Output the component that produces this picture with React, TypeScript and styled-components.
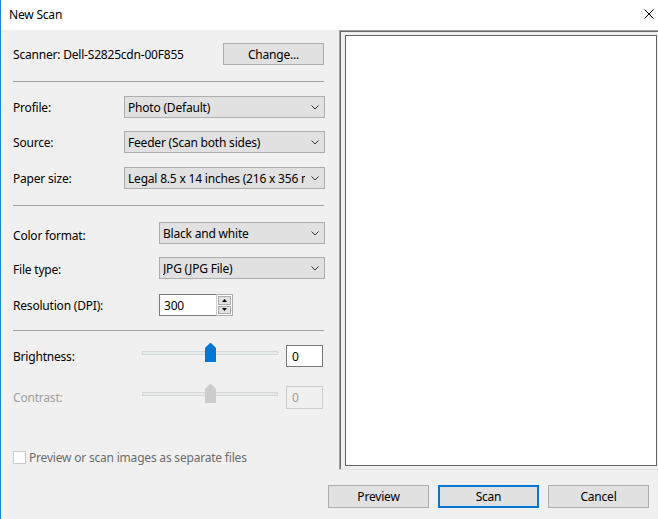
import React from 'react';
import styled, { createGlobalStyle } from 'styled-components';

const Global = createGlobalStyle`
  html, body { margin: 0; padding: 0; background: #f0f0f0; }
  body {
    font-family: "Noto Sans", "Segoe UI", sans-serif;
    font-size: 12px;
    letter-spacing: -0.2px;
    color: #000;
  }
  * { box-sizing: border-box; }
`;

const Window = styled.div`
  width: 658px;
  height: 519px;
  overflow: hidden;
  border-left: 1px solid #1883d7;
  background: #f0f0f0;
  display: flex;
  flex-direction: column;
`;

const TitleBar = styled.div`
  height: 30px;
  flex: none;
  background: #fff;
  display: flex;
  align-items: center;
  justify-content: space-between;
  padding-left: 8px;
`;

const Title = styled.span`
  font-size: 12px;
  line-height: 16px;
`;

const CloseBox = styled.div`
  align-self: flex-start;
  margin-top: 9px;
  margin-right: 4px;
  width: 10px;
  height: 10px;
  display: flex;
`;

const Main = styled.div`
  display: flex;
  height: 440px;
  flex: none;
`;

const LeftPanel = styled.div`
  width: 338px;
  flex: none;
  padding-left: 12px;
  padding-right: 14px;
  display: flex;
  flex-direction: column;
`;

const Row = styled.div<{ $top: number; $h?: number }>`
  display: flex;
  align-items: center;
  margin-top: ${p => p.$top}px;
  height: ${p => p.$h ?? 22}px;
  flex: none;
`;

const SpacedRow = styled(Row)`
  justify-content: space-between;
`;

const Label = styled.span<{ $w?: number; $shift?: number; $disabled?: boolean }>`
  width: ${p => (p.$w ? `${p.$w}px` : 'auto')};
  flex: none;
  white-space: nowrap;
  padding-top: ${p => p.$shift ?? 0}px;
  color: ${p => (p.$disabled ? '#a0a0a0' : '#000')};
`;

const Separator = styled.div<{ $top: number }>`
  margin-top: ${p => p.$top}px;
  width: 311px;
  height: 1px;
  background: #a0a0a0;
  flex: none;
`;

const Button = styled.button<{ $default?: boolean; $w?: number }>`
  width: ${p => p.$w ?? 101}px;
  height: 23px;
  background: #e1e1e1;
  border: ${p => (p.$default ? '2px solid #0078d7' : '1px solid #adadad')};
  font-family: inherit;
  font-size: 12px;
  letter-spacing: inherit;
  color: #000;
  padding: 0;
  display: flex;
  align-items: center;
  justify-content: center;
  cursor: default;
`;

const ChangeButton = styled(Button)`
  height: 22px;
  margin-right: 1px;
`;

const Select = styled.div<{ $w: number }>`
  width: ${p => p.$w}px;
  height: 22px;
  background: #e1e1e1;
  border: 1px solid #adadad;
  display: flex;
  align-items: center;
  padding-left: 3px;
`;

const SelectText = styled.span`
  flex: 1;
  min-width: 0;
  overflow: hidden;
  white-space: nowrap;
`;

const ChevronBox = styled.svg`
  flex: none;
  margin-left: 6px;
  margin-right: 5px;
`;

const NumberBox = styled.div`
  display: flex;
  align-items: center;
  height: 22px;
`;

const NumberInput = styled.div`
  width: 57px;
  height: 22px;
  background: #fff;
  border: 1px solid #7a7a7a;
  border-right: none;
  display: flex;
  align-items: center;
  padding-left: 4px;
`;

const Spinner = styled.div`
  width: 17px;
  height: 22px;
  display: flex;
  flex-direction: column;
  justify-content: center;
  gap: 1px;
  padding: 1px 0;
  background: #fff;
  border: 1px solid #adadad;
  border-left: 1px solid #d0d0d0;
`;

const SpinBtn = styled.div`
  flex: 1;
  margin: 0 1px;
  background: #e1e1e1;
  border: 1px solid #adadad;
  display: flex;
  align-items: center;
  justify-content: center;
`;

const SliderWrap = styled.div`
  position: relative;
  width: 136px;
  height: 19px;
  align-self: flex-start;
  margin-top: -2px;
  flex: none;
`;

const Track = styled.div`
  position: absolute;
  left: 0;
  right: 0;
  top: 8px;
  height: 4px;
  background: #e7eaea;
  border: 1px solid #d6d6d6;
`;

const Thumb = styled.svg`
  position: absolute;
  top: 0;
`;

const ValueBox = styled.div<{ $disabled?: boolean }>`
  width: 37px;
  height: ${p => (p.$disabled ? 23 : 22)}px;
  margin-left: 8px;
  background: ${p => (p.$disabled ? '#f0f0f0' : '#fff')};
  border: 1px solid ${p => (p.$disabled ? '#cccccc' : '#7a7a7a')};
  color: ${p => (p.$disabled ? '#a0a0a0' : '#000')};
  display: flex;
  align-items: center;
  padding-left: 5px;
`;

const CheckBox = styled.div`
  width: 13px;
  height: 13px;
  border: 1px solid #cccccc;
  background: #fff;
  flex: none;
`;

const CheckLabel = styled.span`
  margin-left: 3px;
  color: #6d6d6d;
  white-space: nowrap;
`;

const PreviewFrame = styled.div`
  width: 330px;
  height: 440px;
  flex: none;
  border-top: 1px solid #a0a0a0;
  border-left: 1px solid #a0a0a0;
  border-bottom: 1px solid #e3e3e3;
  box-shadow: inset 1px 1px 0 #696969;
  padding: 4px 0 4px 5px;
  display: flex;
`;

const PreviewPaper = styled.div`
  width: 312px;
  height: 431px;
  background: #fff;
  border: 1px solid #646464;
`;

const Footer = styled.div`
  flex: 1;
  display: flex;
  justify-content: flex-end;
  align-items: flex-start;
  gap: 9px;
  padding-top: 15px;
  padding-right: 9px;
`;

const Chevron = () => (
  <ChevronBox width="8" height="5" viewBox="0 0 8 5">
    <polyline points="0.5,0.5 4,4 7.5,0.5" fill="none" stroke="#333" strokeWidth="1" />
  </ChevronBox>
);

const Dropdown = ({ w, text }: { w: number; text: string }) => (
  <Select $w={w}>
    <SelectText>{text}</SelectText>
    <Chevron />
  </Select>
);

const Slider = ({ disabled }: { disabled?: boolean }) => (
  <SliderWrap>
    <Track />
    <Thumb width="11" height="19" viewBox="0 0 11 19" style={{ left: 63 }}>
      <polygon points="0,5 5,0 6,0 11,5 11,19 0,19" fill={disabled ? '#cccccc' : '#0078d7'} />
    </Thumb>
  </SliderWrap>
);

export default function App() {
  return (
    <>
      <Global />
      <Window>
        <TitleBar>
          <Title>New Scan</Title>
          <CloseBox>
            <svg width="10" height="10" viewBox="0 0 10 10">
              <path d="M0.5 0.5 L9.5 9.5 M9.5 0.5 L0.5 9.5" stroke="#000" strokeWidth="1" />
            </svg>
          </CloseBox>
        </TitleBar>
        <Main>
          <LeftPanel>
            <SpacedRow $top={13}>
              <Label>Scanner: Dell-S2825cdn-00F855</Label>
              <ChangeButton>Change...</ChangeButton>
            </SpacedRow>
            <Separator $top={16} />
            <Row $top={14}>
              <Label $w={111}>Profile:</Label>
              <Dropdown w={201} text="Photo (Default)" />
            </Row>
            <Row $top={13}>
              <Label $w={111}>Source:</Label>
              <Dropdown w={201} text="Feeder (Scan both sides)" />
            </Row>
            <Row $top={14}>
              <Label $w={111}>Paper size:</Label>
              <Dropdown w={201} text="Legal 8.5 x 14 inches (216 x 356 mm)" />
            </Row>
            <Separator $top={16} />
            <Row $top={16}>
              <Label $w={146} $shift={4}>Color format:</Label>
              <Dropdown w={166} text="Black and white" />
            </Row>
            <Row $top={13}>
              <Label $w={146} $shift={3}>File type:</Label>
              <Dropdown w={166} text="JPG (JPG File)" />
            </Row>
            <Row $top={15}>
              <Label $w={146}>Resolution (DPI):</Label>
              <NumberBox>
                <NumberInput>300</NumberInput>
                <Spinner>
                  <SpinBtn>
                    <svg width="5" height="3" viewBox="0 0 5 3"><polygon points="2.5,0 5,3 0,3" fill="#000" /></svg>
                  </SpinBtn>
                  <SpinBtn>
                    <svg width="5" height="3" viewBox="0 0 5 3"><polygon points="0,0 5,0 2.5,3" fill="#000" /></svg>
                  </SpinBtn>
                </Spinner>
              </NumberBox>
            </Row>
            <Separator $top={14} />
            <Row $top={14}>
              <Label $w={129}>Brightness:</Label>
              <Slider />
              <ValueBox>0</ValueBox>
            </Row>
            <Row $top={19} $h={23}>
              <Label $w={129} $disabled>Contrast:</Label>
              <Slider disabled />
              <ValueBox $disabled>0</ValueBox>
            </Row>
            <Row $top={42} $h={13}>
              <CheckBox />
              <CheckLabel>Preview or scan images as separate files</CheckLabel>
            </Row>
          </LeftPanel>
          <PreviewFrame>
            <PreviewPaper />
          </PreviewFrame>
        </Main>
        <Footer>
          <Button>Preview</Button>
          <Button $default>Scan</Button>
          <Button>Cancel</Button>
        </Footer>
      </Window>
    </>
  );
}
